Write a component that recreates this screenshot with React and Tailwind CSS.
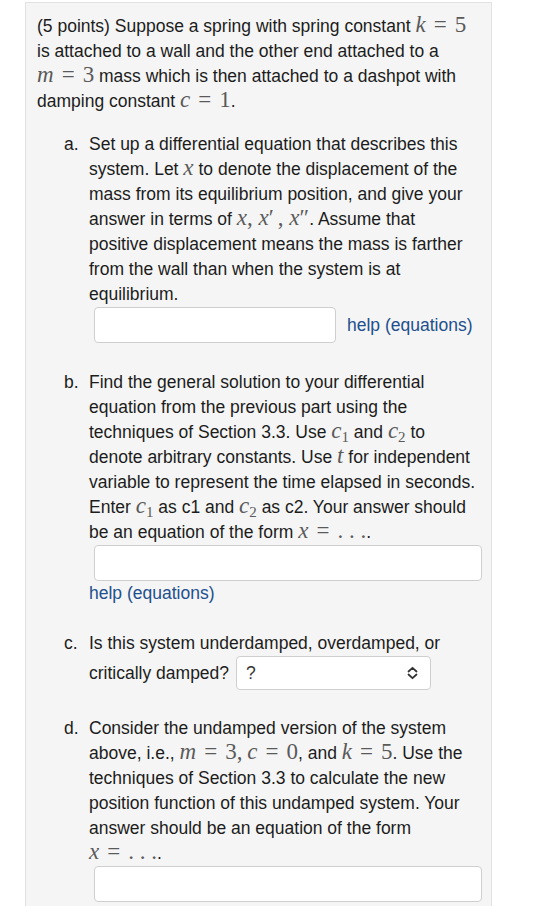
import React from "react";

// bits of math, set in a serif like the MathJax output of the page
function M({ children, className = "" }) {
  return (
    <span
      className={"text-[23px] leading-[0] text-[#5a5a5a] " + className}
      style={{ fontFamily: '"Liberation Serif", "DejaVu Serif", serif' }}
    >
      {children}
    </span>
  );
}

function V({ children }) {
  return <span className="italic">{children}</span>;
}

function Eq() {
  return <span className="mx-[5px] inline-block w-[19px] text-center">=</span>;
}

function Sub({ c, n }) {
  return (
    <M>
      <V>{c}</V>
      <span className="relative top-[4px] text-[15px]">{n}</span>
    </M>
  );
}

function L({ children }) {
  return <span className="block whitespace-nowrap">{children}</span>;
}

function Item({ label, children }) {
  return (
    <div className="flex">
      <div className="w-[52px] shrink-0 pl-[27px]">{label}</div>
      <div className="flex-1">{children}</div>
    </div>
  );
}

function Input({ width }) {
  return (
    <div
      className={"ml-[5px] h-[36px] rounded-[4px] border border-[#cfcfcf] bg-white " + width}
    />
  );
}

function Help({ className = "" }) {
  return <a className={"text-[#21508e] " + className}>help (equations)</a>;
}

export default function App() {
  return (
    <div
      className="h-[906px] overflow-hidden bg-white text-[17.5px] leading-[25px] text-[#1c1c1c]"
      style={{ fontFamily: '"Liberation Sans", Arial, sans-serif' }}
    >
      <div className="ml-[25px] mt-[2px] w-[467px] border border-[#e2e2e2] bg-[#f5f5f5] pb-4 pl-[11px] pt-[11px]">
        <p>
          <L>
            (5 points) Suppose a spring with spring constant{" "}
            <M>
              <V>k</V>
              <Eq />5
            </M>
          </L>
          <L>is attached to a wall and the other end attached to a</L>
          <L>
            <M>
              <V>m</V>
              <Eq />3
            </M>{" "}
            mass which is then attached to a dashpot with
          </L>
          <L>
            damping constant{" "}
            <M>
              <V>c</V>
              <Eq />1
            </M>
            .
          </L>
        </p>

        {/* part a */}
        <div className="mt-[18px]">
          <Item label="a.">
            <p>
              <L>Set up a differential equation that describes this</L>
              <L>
                system. Let{" "}
                <M>
                  <V>x</V>
                </M>{" "}
                to denote the displacement of the
              </L>
              <L>mass from its equilibrium position, and give your</L>
              <L>
                answer in terms of{" "}
                <M>
                  <V>x</V>, <V>x</V>
                  <span className="mr-[4px]">′</span>, <V>x</V>″
                </M>
                . Assume that
              </L>
              <L>positive displacement means the mass is farther</L>
              <L>from the wall than when the system is at</L>
              <L>equilibrium.</L>
            </p>
            <div className="flex items-center">
              <Input width="w-[242px]" />
              <Help className="ml-[11px]" />
            </div>
          </Item>
        </div>

        {/* part b */}
        <div className="mt-[27px]">
          <Item label="b.">
            <p>
              <L>Find the general solution to your differential</L>
              <L>equation from the previous part using the</L>
              <L>
                techniques of Section 3.3. Use <Sub c="c" n="1" /> and <Sub c="c" n="2" /> to
              </L>
              <L>
                denote arbitrary constants. Use{" "}
                <M>
                  <V>t</V>
                </M>{" "}
                for independent
              </L>
              <L>variable to represent the time elapsed in seconds.</L>
              <L>
                Enter <Sub c="c" n="1" /> as c1 and <Sub c="c" n="2" /> as c2. Your answer should
              </L>
              <L>
                be an equation of the form{" "}
                <M>
                  <V>x</V>
                  <Eq />. . .
                </M>
                .
              </L>
            </p>
            <Input width="w-[388px]" />
            <Help className="block" />
          </Item>
        </div>

        {/* part c */}
        <div className="mt-[25px]">
          <Item label="c.">
            <p>Is this system underdamped, overdamped, or</p>
            <div className="flex items-center">
              <span>critically damped?</span>
              <div className="ml-[7px] flex h-[34px] w-[195px] items-center justify-between rounded-[4px] border border-[#cfcfcf] bg-white pl-[9px] pr-[12px]">
                <span className="text-[#333]">?</span>
                <svg width="11" height="14" viewBox="0 0 11 14" fill="none">
                  <polyline
                    points="1.5,5.5 5.5,1.8 9.5,5.5"
                    stroke="#333"
                    strokeWidth="1.8"
                    strokeLinecap="round"
                    strokeLinejoin="round"
                  />
                  <polyline
                    points="1.5,8.5 5.5,12.2 9.5,8.5"
                    stroke="#333"
                    strokeWidth="1.8"
                    strokeLinecap="round"
                    strokeLinejoin="round"
                  />
                </svg>
              </div>
            </div>
          </Item>
        </div>

        {/* part d */}
        <div className="mt-[26px]">
          <Item label="d.">
            <p>
              <L>Consider the undamped version of the system</L>
              <L>
                above, i.e.,{" "}
                <M>
                  <V>m</V>
                  <Eq />3,
                </M>{" "}
                <M>
                  <V>c</V>
                  <Eq />0
                </M>
                , and{" "}
                <M>
                  <V>k</V>
                  <Eq />5
                </M>
                . Use the
              </L>
              <L>techniques of Section 3.3 to calculate the new</L>
              <L>position function of this undamped system. Your</L>
              <L>answer should be an equation of the form</L>
              <L>
                <M>
                  <V>x</V>
                  <Eq />. . .
                </M>
                .
              </L>
            </p>
            <Input width="w-[388px]" />
          </Item>
        </div>
      </div>
    </div>
  );
}
